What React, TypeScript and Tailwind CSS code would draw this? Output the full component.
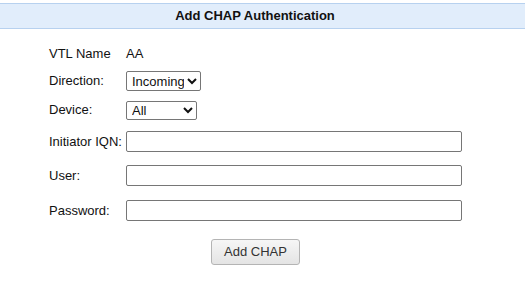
import React, { useState } from "react";

const font = { fontFamily: '"Liberation Sans", Arial, sans-serif' };

const Row = ({ label, h, children }: { label: string; h: string; children: React.ReactNode }) => (
  <div className={`flex items-center ${h}`}>
    <div className="w-[77px] shrink-0">{label}</div>
    <div className="flex items-center">{children}</div>
  </div>
);

const App = () => {
  const [direction, setDirection] = useState("Incoming");
  const [device, setDevice] = useState("All");
  const [iqn, setIqn] = useState("");
  const [user, setUser] = useState("");
  const [password, setPassword] = useState("");

  return (
    <div className="w-[525px] h-[288px] bg-white text-[13px] text-[#111]" style={font}>
      <div className="mt-[3px] h-[26px] bg-[#e1edfb] border-y border-[#b7d1ef] flex items-center justify-center pr-[15px]">
        <h2 className="font-bold text-[13px] text-[#111]">Add CHAP Authentication</h2>
      </div>
      <div className="pt-[12px] pl-[49px] w-[462px]">
        <Row label="VTL Name" h="h-[26px]">
          <span>AA</span>
        </Row>
        <Row label="Direction:" h="h-[28px]">
          <select
            className="h-[20px] w-[75px] border border-[#767676] rounded-[2px] bg-white text-[13px] pl-[1px]"
            value={direction}
            onChange={(e) => setDirection(e.target.value)}
          >
            <option>Incoming</option>
            <option>Outgoing</option>
          </select>
        </Row>
        <Row label="Device:" h="h-[30px]">
          <select
            className="h-[19px] w-[71px] border border-[#767676] rounded-[2px] bg-white text-[13px] pl-[1px]"
            value={device}
            onChange={(e) => setDevice(e.target.value)}
          >
            <option>All</option>
          </select>
        </Row>
        <Row label="Initiator IQN:" h="h-[33px]">
          <input
            className="h-[21px] w-[336px] border border-[#767676] rounded-[2px] px-[2px]"
            value={iqn}
            onChange={(e) => setIqn(e.target.value)}
          />
        </Row>
        <Row label="User:" h="h-[35px]">
          <input
            className="h-[21px] w-[336px] border border-[#767676] rounded-[2px] px-[2px]"
            value={user}
            onChange={(e) => setUser(e.target.value)}
          />
        </Row>
        <Row label="Password:" h="h-[35px]">
          <input
            type="password"
            className="h-[21px] w-[336px] border border-[#767676] rounded-[2px] px-[2px]"
            value={password}
            onChange={(e) => setPassword(e.target.value)}
          />
        </Row>
        <div className="mt-[11px] flex justify-center">
          <button className="h-[26px] w-[89px] border border-[#b4b4b4] rounded-[3px] bg-gradient-to-b from-[#f6f6f6] to-[#e4e4e4] text-[13px] text-[#333]">
            Add CHAP
          </button>
        </div>
      </div>
    </div>
  );
};

export default App;
